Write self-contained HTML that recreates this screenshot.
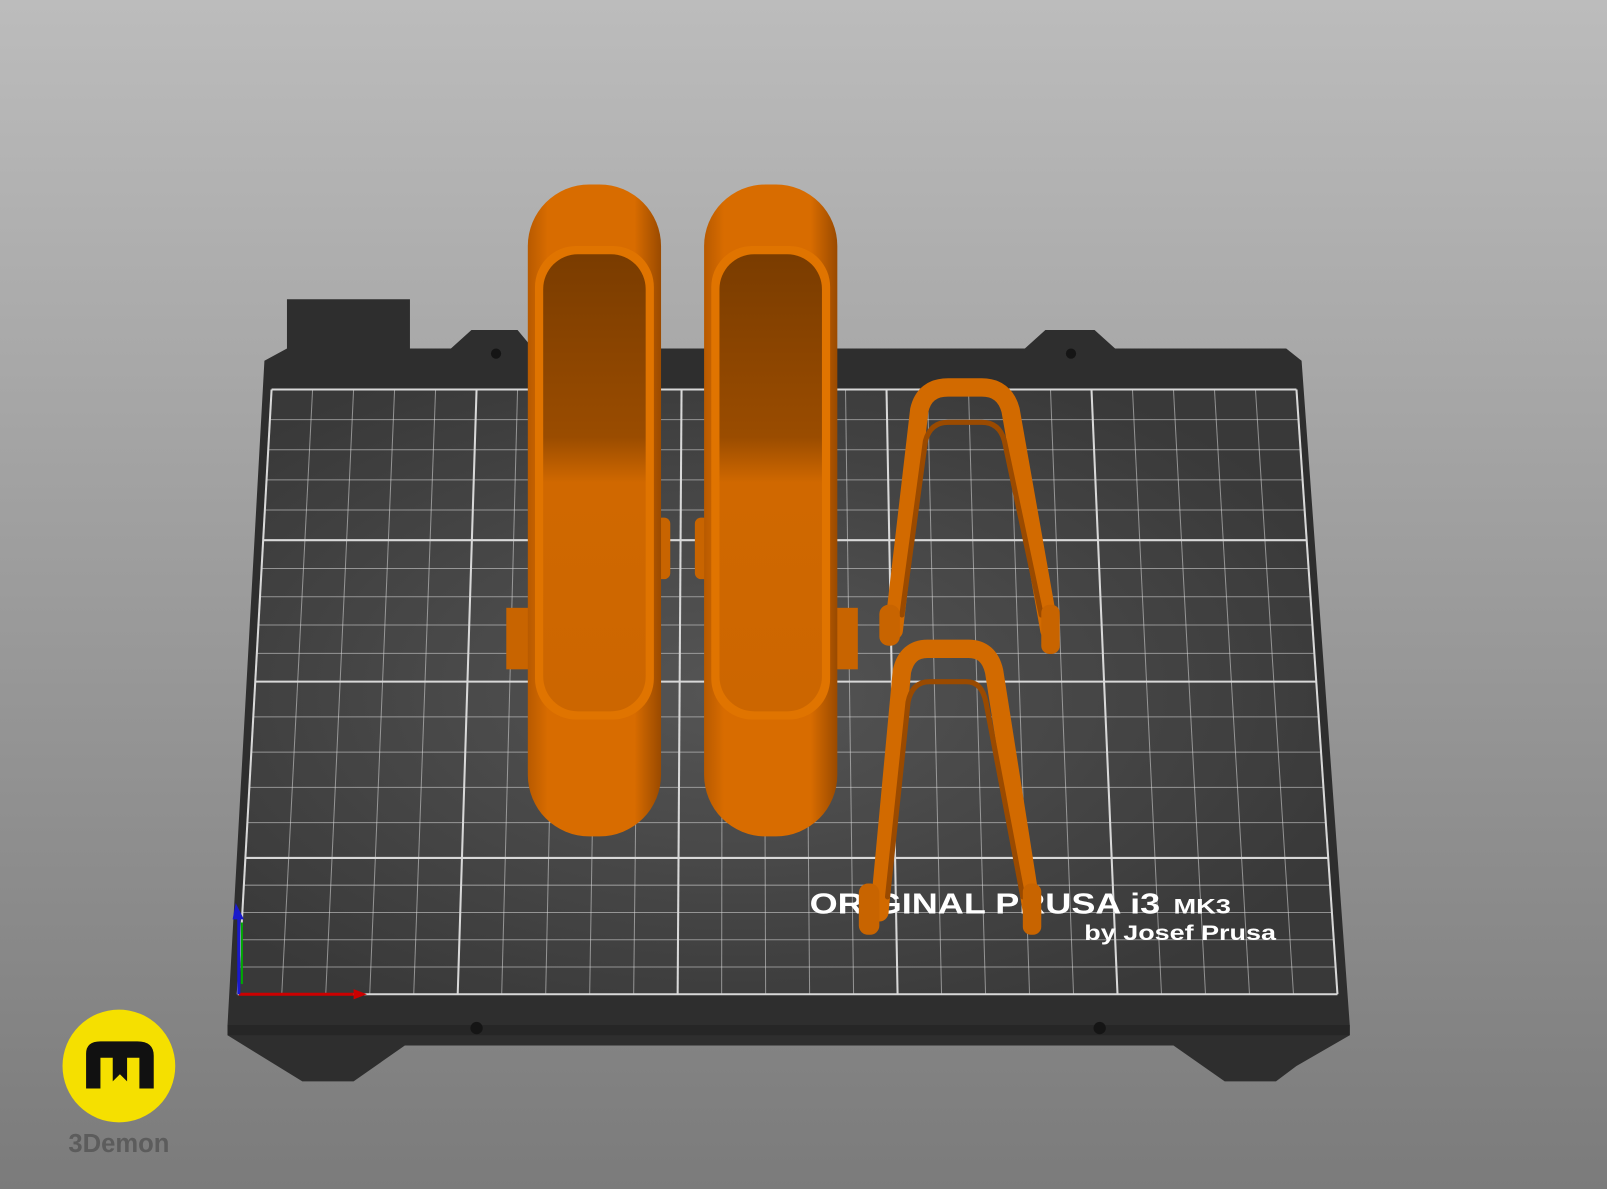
<!DOCTYPE html>
<html><head><meta charset="utf-8"><style>
html,body{margin:0;padding:0;width:1607px;height:1189px;overflow:hidden;background:#999}
svg{display:block}
</style></head><body>
<svg width="1607" height="1189" viewBox="0 0 1568 1160" preserveAspectRatio="none" xmlns="http://www.w3.org/2000/svg">
<defs>
<linearGradient id="bg" x1="0" y1="0" x2="0" y2="1">
<stop offset="0" stop-color="#bcbcbc"/><stop offset="1" stop-color="#7b7b7b"/></linearGradient>
<radialGradient id="bedg" cx="0.45" cy="0.5" r="0.6">
<stop offset="0" stop-color="#555"/><stop offset="1" stop-color="#393939"/></radialGradient>
<linearGradient id="cap" x1="0" y1="0" x2="1" y2="0">
<stop offset="0" stop-color="#b85a00"/><stop offset="0.15" stop-color="#d86c00"/><stop offset="0.8" stop-color="#d86c00"/><stop offset="1" stop-color="#9a4a00"/></linearGradient>
<linearGradient id="inner" x1="0" y1="0" x2="0" y2="1">
<stop offset="0" stop-color="#7a3c00"/><stop offset="0.4" stop-color="#9a4c00"/><stop offset="0.5" stop-color="#d06800"/><stop offset="1" stop-color="#cc6600"/></linearGradient>
</defs>
<rect width="1568" height="1160" fill="url(#bg)"/>
<polygon points="280,292 400,292 400,340 440,340 460,322 505,322 520,340 1000,340 1020,322 1068,322 1088,340 1255,340 1270,352 1317,1000 1317,1010 1265,1040 1245,1055 1195,1055 1145,1020 395,1020 345,1055 295,1055 222,1010 222,1000 258,352 280,340" fill="#2e2e2e"/>
<polygon points="222,1000 1317,1000 1317,1010 222,1010" fill="#262626"/>
<circle cx="484" cy="345" r="5" fill="#151515"/><circle cx="1045" cy="345" r="5" fill="#151515"/>
<circle cx="465" cy="1003" r="6" fill="#151515"/><circle cx="1073" cy="1003" r="6" fill="#151515"/>
<polygon points="265,380 1265,380 1305,970 232,970" fill="url(#bedg)"/>
<g id="grid" stroke="#d8d8d8" fill="none"></g>
<line x1="233" y1="970" x2="345" y2="970" stroke="#c00" stroke-width="3"/>
<polygon points="345,965 358,970 345,975" fill="#c00"/>
<line x1="233" y1="970" x2="233" y2="895" stroke="#1a1acc" stroke-width="3"/>
<polygon points="227,897 230,881 238,897" fill="#1a1acc"/>
<line x1="236" y1="960" x2="236" y2="900" stroke="#0a0" stroke-width="2"/>
<text x="790" y="891" font-family="Liberation Sans,sans-serif" font-size="28" font-weight="bold" fill="#fff" textLength="342" lengthAdjust="spacingAndGlyphs">ORIGINAL PRUSA i3</text>
<text x="1145" y="891" font-family="Liberation Sans,sans-serif" font-size="21" font-weight="bold" fill="#fff" textLength="56" lengthAdjust="spacingAndGlyphs">MK3</text>
<text x="1058" y="917" font-family="Liberation Sans,sans-serif" font-size="21" font-weight="bold" fill="#fff" textLength="187" lengthAdjust="spacingAndGlyphs">by Josef Prusa</text>
<g>
<rect x="494" y="593" width="24" height="60" fill="#c86400"/>
<rect x="640" y="505" width="14" height="60" rx="6" fill="#c86400"/>
<rect x="515" y="180" width="130" height="636" rx="60" fill="url(#cap)"/>
<rect x="522" y="240" width="116" height="462" rx="40" fill="#e07400"/>
<rect x="530" y="248" width="100" height="446" rx="34" fill="url(#inner)"/>
</g>
<g>
<rect x="815" y="593" width="22" height="60" fill="#c86400"/>
<rect x="678" y="505" width="14" height="60" rx="6" fill="#c86400"/>
<rect x="687" y="180" width="130" height="636" rx="60" fill="url(#cap)"/>
<rect x="694" y="240" width="116" height="462" rx="40" fill="#e07400"/>
<rect x="702" y="248" width="100" height="446" rx="34" fill="url(#inner)"/>
</g>
<g fill="none" stroke-linecap="round" stroke-linejoin="round">
<path d="M872,615 L897,400 Q902,378 925,378 L958,378 Q980,378 986,400 L1024,615" stroke="#d26a00" stroke-width="18"/>
<path d="M880,600 L903,430 Q908,412 925,412 L958,412 Q975,412 980,430 L1016,600" stroke="#9a4a00" stroke-width="5"/>
<path d="M858,890 L880,655 Q885,633 905,633 L945,633 Q965,633 970,655 L1007,890" stroke="#d26a00" stroke-width="18"/>
<path d="M866,875 L886,685 Q890,665 907,665 L943,665 Q958,665 962,685 L998,875" stroke="#9a4a00" stroke-width="5"/>
</g>
<g fill="#c86400">
<rect x="858" y="590" width="20" height="40" rx="9"/><rect x="1016" y="590" width="18" height="48" rx="8"/>
<rect x="838" y="862" width="20" height="50" rx="9"/><rect x="998" y="862" width="18" height="50" rx="8"/>
</g>
<circle cx="116" cy="1040" r="55" fill="#f5e000"/>
<path d="M84,1062 L84,1028 Q84,1016 98,1016 L134,1016 Q150,1016 150,1030 L150,1062 L136,1062 L136,1032 L124,1032 L124,1055 L117,1048 L110,1055 L110,1032 L98,1032 L98,1062 Z" fill="#111"/>
<text x="116" y="1124" text-anchor="middle" font-family="Liberation Sans,sans-serif" font-size="25" font-weight="bold" fill="#5c5c5c">3Demon</text>
</svg>
<script>
(function(){
var g=document.getElementById('grid'),ns='http://www.w3.org/2000/svg';
var yT=380,yB=970,xTL=265,xTR=1265,xBL=232,xBR=1305;
function xl(y){return xTL+(xBL-xTL)*(y-yT)/(yB-yT);}
function xr(y){return xTR+(xBR-xTR)*(y-yT)/(yB-yT);}
function ln(a,b,c,d,w,o){var l=document.createElementNS(ns,'line');l.setAttribute('x1',a);l.setAttribute('y1',b);l.setAttribute('x2',c);l.setAttribute('y2',d);l.setAttribute('stroke-width',w);l.setAttribute('opacity',o);g.appendChild(l);}
for(var i=0;i<=25;i++){var t=i/25,maj=i%5==0;ln(xTL+(xTR-xTL)*t,yT,xBL+(xBR-xBL)*t,yB,maj?2:1,maj?1:0.55);}
var ym=[380,527,665,837,970];
for(var k=0;k<4;k++){for(var j=0;j<5;j++){var y=ym[k]+(ym[k+1]-ym[k])*j/5;ln(xl(y),y,xr(y),y,j==0?2:1,j==0?1:0.55);}}
ln(xBL,yB,xBR,yB,2,1);
})();
</script>
</body></html>
